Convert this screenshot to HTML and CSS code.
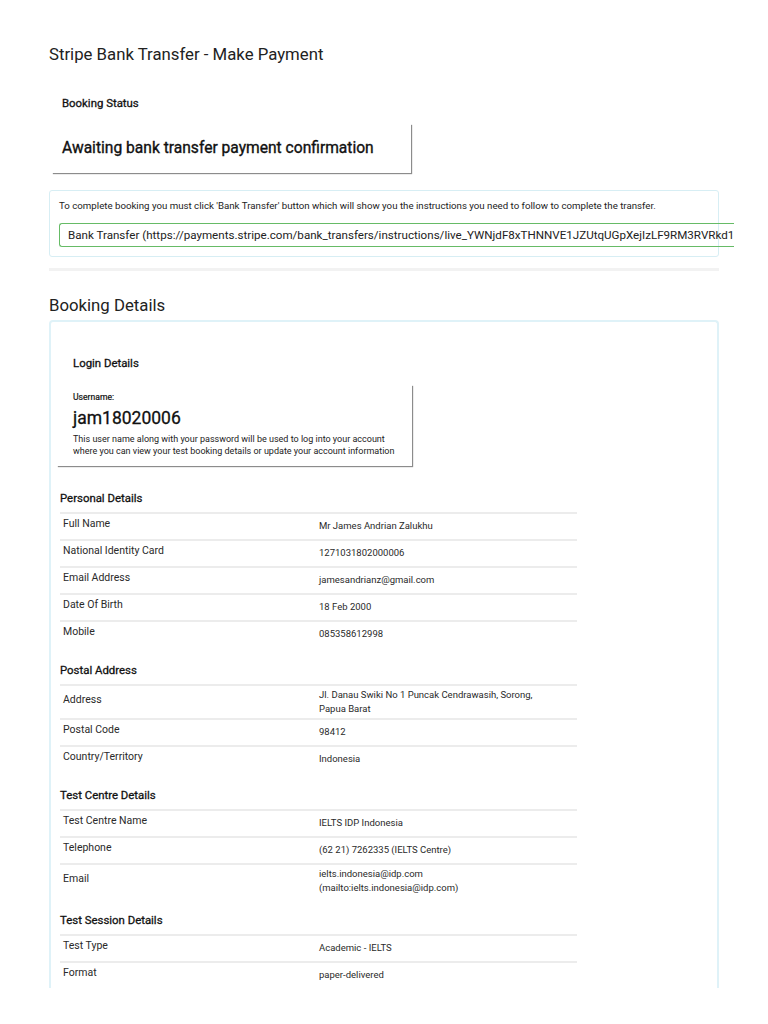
FILE: index.html
```html
<!DOCTYPE html>
<html lang="en">
<head>
<meta charset="utf-8">
<title>Stripe Bank Transfer - Make Payment</title>
<link rel="stylesheet" href="styles.css">
</head>
<body>
<div class="page">
  <h1 class="page-title">Stripe Bank Transfer - Make Payment</h1>

  <div class="status-section">
    <h3 class="small-heading">Booking Status</h3>
  </div>
  <div class="status-box">Awaiting bank transfer payment confirmation</div>

  <div class="info-box">
    <p class="info-text">To complete booking you must click 'Bank Transfer' button which will show you the instructions you need to follow to complete the transfer.</p>
    <div class="transfer-btn">Bank Transfer (https://payments.stripe.com/bank_transfers/instructions/live_YWNjdF8xTHNNVE1JZUtqUGpXejIzLF9RM3RVRkd1</div>
  </div>

  <div class="divider"></div>

  <h2 class="section-title">Booking Details</h2>

  <div class="card">
    <div class="login">
      <h3 class="small-heading login-heading">Login Details</h3>
      <div class="user-box">
        <div class="user-label">Username:</div>
        <div class="user-name">jam18020006</div>
        <p class="user-desc">This user name along with your password will be used to log into your account where you can view your test booking details or update your account information</p>
      </div>
    </div>

    <h3 class="small-heading group-heading first">Personal Details</h3>
    <table class="details">
      <tr><td class="lbl">Full Name</td><td class="val">Mr James Andrian Zalukhu</td></tr>
      <tr><td class="lbl">National Identity Card</td><td class="val">1271031802000006</td></tr>
      <tr><td class="lbl">Email Address</td><td class="val">jamesandrianz@gmail.com</td></tr>
      <tr><td class="lbl">Date Of Birth</td><td class="val">18 Feb 2000</td></tr>
      <tr><td class="lbl">Mobile</td><td class="val">085358612998</td></tr>
    </table>

    <h3 class="small-heading group-heading">Postal Address</h3>
    <table class="details">
      <tr><td class="lbl">Address</td><td class="val">Jl. Danau Swiki No 1 Puncak Cendrawasih, Sorong,<br>Papua Barat</td></tr>
      <tr><td class="lbl">Postal Code</td><td class="val">98412</td></tr>
      <tr><td class="lbl">Country/Territory</td><td class="val">Indonesia</td></tr>
    </table>

    <h3 class="small-heading group-heading">Test Centre Details</h3>
    <table class="details">
      <tr><td class="lbl">Test Centre Name</td><td class="val">IELTS IDP Indonesia</td></tr>
      <tr><td class="lbl">Telephone</td><td class="val">(62 21) 7262335 (IELTS Centre)</td></tr>
      <tr><td class="lbl">Email</td><td class="val">ielts.indonesia@idp.com<br>(mailto:ielts.indonesia@idp.com)</td></tr>
    </table>

    <h3 class="small-heading group-heading">Test Session Details</h3>
    <table class="details">
      <tr><td class="lbl">Test Type</td><td class="val">Academic - IELTS</td></tr>
      <tr><td class="lbl">Format</td><td class="val">paper-delivered</td></tr>
    </table>
  </div>
</div>
</body>
</html>
```

FILE: styles.css
```css
html, body {
  margin: 0;
  padding: 0;
  background: #ffffff;
}

body {
  font-family: Roboto, "Liberation Sans", Arial, sans-serif;
  color: #222222;
}

.page {
  padding: 44px 0 0 49px;
  width: 670px;
}

.page-title {
  margin: 0;
  font-size: 16.75px;
  line-height: 20px;
  font-weight: 400;
  color: #222222;
}

.small-heading {
  margin: 0;
  font-size: 11.4px;
  line-height: 14px;
  font-weight: 400;
  color: #111111;
  -webkit-text-stroke: 0.3px #111111;
}

.status-section {
  margin-top: 32px;
  padding-left: 13px;
}

.status-box {
  margin: 14px 0 0 3px;
  width: 339px;
  padding: 15px 10px 16px;
  font-size: 15.6px;
  line-height: 18px;
  font-weight: 400;
  color: #111111;
  -webkit-text-stroke: 0.35px #111111;
  box-shadow: 1px 1px 1px rgba(0, 0, 0, 0.45);
}

.info-box {
  margin-top: 17px;
  border: 1px solid #d7eef4;
  border-radius: 3px;
  padding: 9px 9px 9px;
}

.info-text {
  margin: 0;
  font-size: 9.7px;
  line-height: 12px;
  color: #222222;
}

.transfer-btn {
  margin-top: 11px;
  width: 666px;
  height: 22px;
  border: 1px solid #66bb66;
  border-right: none;
  border-radius: 3px 0 0 3px;
  padding-left: 8px;
  font-size: 11.6px;
  line-height: 22px;
  color: #222222;
  white-space: nowrap;
  overflow: hidden;
}

.divider {
  margin-top: 11px;
  height: 3px;
  background: #f2f2f2;
}

.section-title {
  margin: 24px 0 0;
  font-size: 16.75px;
  line-height: 20px;
  font-weight: 400;
  color: #222222;
}

.card {
  margin-top: 5px;
  border: 2px solid #dff2f8;
  border-bottom: none;
  border-radius: 4px 4px 0 0;
  padding: 34px 9px 0;
}

.login {
  margin-left: -3px;
}

.login-heading {
  padding-left: 16px;
}

.user-box {
  margin-top: 15px;
  width: 339px;
  padding: 7px 0 9px 16px;
  box-shadow: 1px 1px 1px rgba(0, 0, 0, 0.45);
}

.user-label {
  font-size: 8.6px;
  line-height: 11px;
  color: #111111;
  -webkit-text-stroke: 0.2px #111111;
}

.user-name {
  margin-top: 5px;
  font-size: 17.5px;
  line-height: 20px;
  font-weight: 400;
  color: #111111;
  -webkit-text-stroke: 0.3px #111111;
}

.user-desc {
  margin: 5px 0 0;
  width: 322px;
  font-size: 9px;
  line-height: 12px;
  color: #222222;
}

.group-heading {
  margin-top: 16px;
}

.group-heading.first {
  margin-top: 25px;
}

.details {
  margin-top: 7px;
  width: 517px;
  border-collapse: collapse;
}

.details td {
  border-top: 2px solid #ececec;
  vertical-align: middle;
}

.details .lbl {
  width: 250px;
  padding: 1px 3px 7px;
  font-size: 10.5px;
  line-height: 17px;
  color: #2a2a2a;
}

.details .val {
  padding: 2px 3px 3px;
  font-size: 9.5px;
  line-height: 13.5px;
  color: #2a2a2a;
}
```
